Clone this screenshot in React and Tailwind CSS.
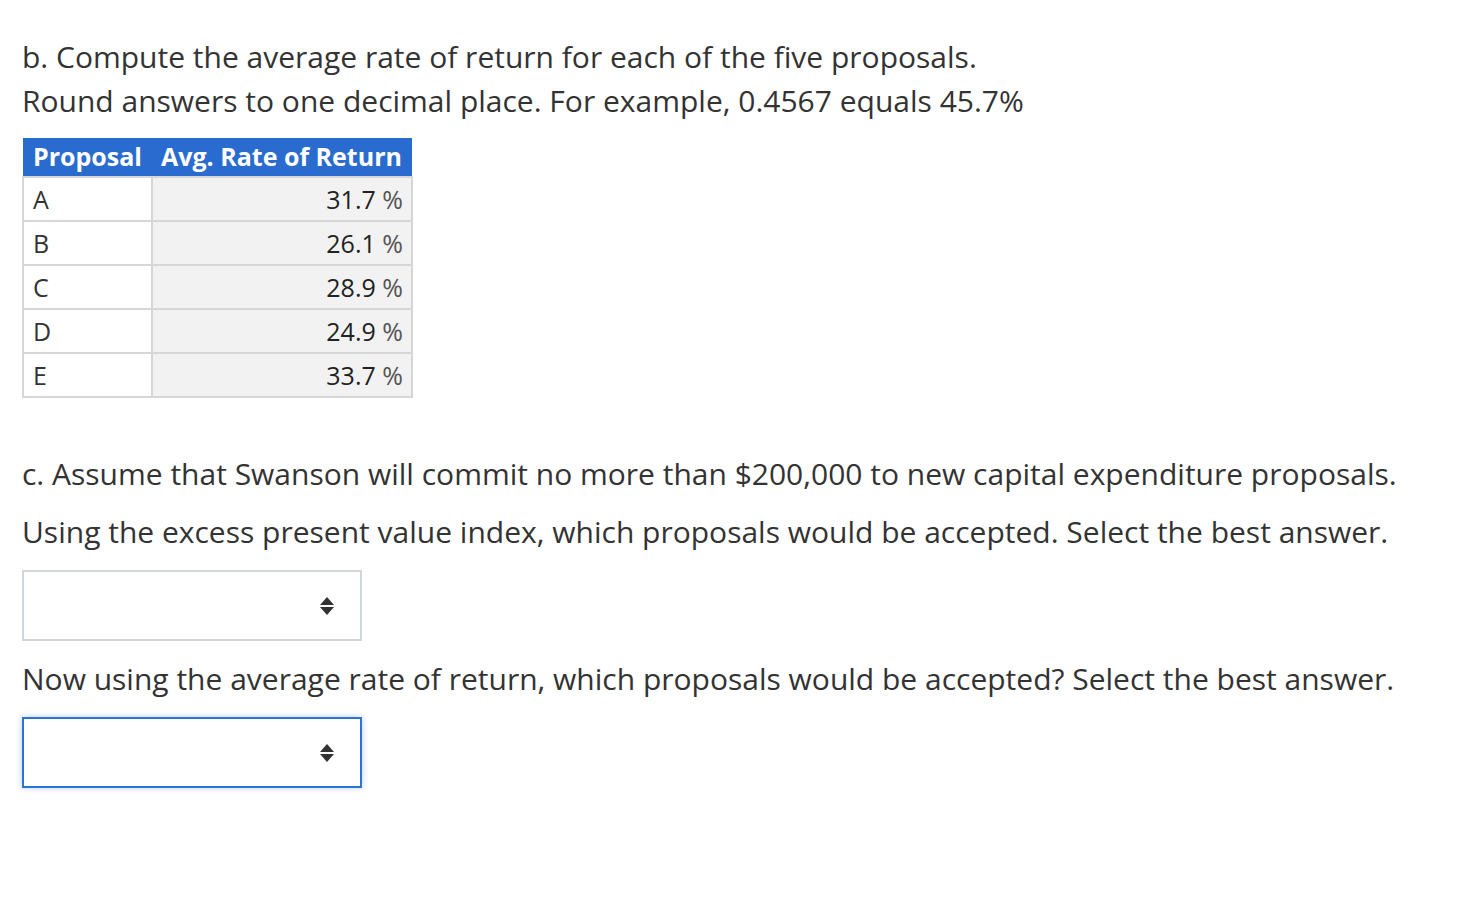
import React from 'react'

const rows = [
    ['A', '31.7'],
    ['B', '26.1'],
    ['C', '28.9'],
    ['D', '24.9'],
    ['E', '33.7'],
]

function SelectBox({ focused }) {
    return (
        <div
            className={
                'w-[340px] h-[71px] bg-white flex items-center justify-end pr-[25px] ' +
                (focused
                    ? 'border-2 border-[#2b74d1] shadow-[0_0_6px_rgba(43,116,209,0.35)]'
                    : 'border-2 border-[#d2d5da]')
            }
        >
            <svg width="16" height="20" viewBox="0 0 16 20" fill="#333">
                <path d="M8 1 L15 9 L1 9 Z" />
                <path d="M1 11 L15 11 L8 19 Z" />
            </svg>
        </div>
    )
}

export default function App() {
    return (
        <div className="min-h-screen bg-white text-[#333] pl-[22px] pt-[35px] font-['Open_Sans',sans-serif]">
            {/* part b */}
            <p className="text-[30px] leading-[44px]">b. Compute the average rate of return for each of the five proposals.</p>
            <p className="text-[30px] leading-[44px]">Round answers to one decimal place. For example, 0.4567 equals 45.7%</p>

            <table className="mt-[15px] border-collapse text-[25px]">
                <thead>
                    <tr className="bg-[#2a6bcf] text-white h-[39px]">
                        <th className="pl-[10px] pr-[9px] pb-[2px] font-bold text-left leading-none">Proposal</th>
                        <th className="pl-[9px] pr-[10px] pb-[2px] font-bold text-left leading-none">Avg. Rate of Return</th>
                    </tr>
                </thead>
                <tbody>
                    {rows.map(([p, v]) => (
                        <tr key={p} className="h-[44px]">
                            <td className="w-[129px] border-2 border-[#d6d6d6] bg-white pl-[9px] text-[#333] leading-none">{p}</td>
                            <td className="border-2 border-[#d6d6d6] bg-[#f2f2f2] text-right pr-[8px] text-[#222] leading-none">
                                {v} <span className="text-[#555]">%</span>
                            </td>
                        </tr>
                    ))}
                </tbody>
            </table>

            {/* part c */}
            <p className="mt-[54px] text-[30px] leading-[44px]">c. Assume that Swanson will commit no more than $200,000 to new capital expenditure proposals.</p>
            <p className="mt-[14px] text-[30px] leading-[44px]">Using the excess present value index, which proposals would be accepted. Select the best answer.</p>

            <div className="mt-[16px]">
                <SelectBox />
            </div>

            <p className="mt-[16px] text-[30px] leading-[44px]">Now using the average rate of return, which proposals would be accepted? Select the best answer.</p>

            <div className="mt-[16px]">
                <SelectBox focused />
            </div>
        </div>
    )
}
